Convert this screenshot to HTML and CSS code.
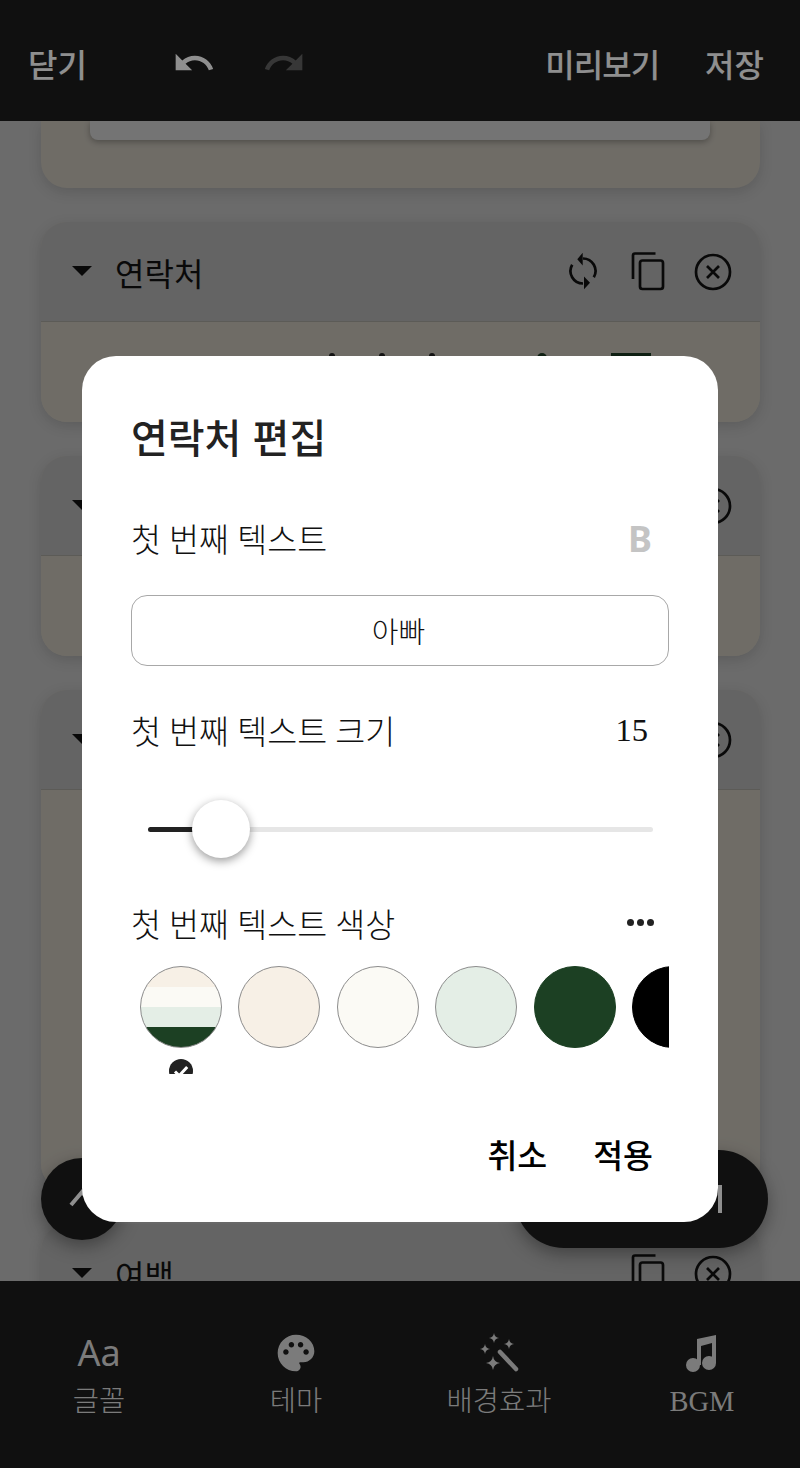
FILE: index.html
```html
<!DOCTYPE html>
<html lang="ko">
<head>
<meta charset="utf-8">
<title>연락처 편집</title>
<link rel="stylesheet" href="styles.css">
</head>
<body>
<div class="app">
  <header class="topbar">
    <span class="top-text close">닫기</span>
    <svg class="icon undo" viewBox="0 0 24 24"><path d="M12.5 8c-2.65 0-5.05.99-6.9 2.6L2 7v9h9l-3.62-3.62c1.39-1.16 3.16-1.88 5.12-1.88 3.54 0 6.55 2.31 7.6 5.5l2.37-.78C21.08 11.03 17.15 8 12.5 8z"/></svg>
    <svg class="icon redo" viewBox="0 0 24 24"><path d="M18.4 10.6C16.55 8.99 14.15 8 11.5 8c-4.65 0-8.58 3.03-9.96 7.22L3.9 16c1.05-3.19 4.05-5.5 7.6-5.5 1.95 0 3.73.72 5.12 1.88L13 16h9V7l-3.6 3.6z"/></svg>
    <span class="top-text preview">미리보기</span>
    <span class="top-text save">저장</span>
  </header>

  <main class="canvas">
    <section class="card card-first"><div class="paper"></div></section>

    <section class="card">
      <div class="card-head">
        <i class="caret"></i><span class="card-title">연락처</span>
        <svg class="line-icon" viewBox="0 0 44 44"><path d="M22 8.5A12.5 12.5 0 0 1 32.8 27.3M22 33.5A12.5 12.5 0 0 1 11.2 14.7"/><path class="solid" d="M16.3 9.3L21.7 2.7V15.5ZM29 32.7L23 26.5V39.3Z"/></svg>
        <svg class="line-icon" viewBox="0 0 44 44"><path d="M7 29V5.5a2 2 0 0 1 2-2H29.5"/><rect x="14" y="10.5" width="23" height="28.5" rx="2.5"/></svg>
        <svg class="line-icon" viewBox="0 0 44 44"><circle cx="22" cy="22" r="17"/><path d="M16 16L28 28M28 16L16 28"/></svg>
      </div>
      <div class="card-body peek"><i class="dot"></i><i class="dot"></i><i class="dot"></i><i class="dot dot-green"></i><i class="bar-green"></i></div>
    </section>

    <section class="card">
      <div class="card-head">
        <i class="caret"></i><span class="card-title"></span>
        <svg class="line-icon" viewBox="0 0 44 44"><circle cx="22" cy="22" r="17"/><path d="M16 16L28 28M28 16L16 28"/></svg>
      </div>
      <div class="card-body"></div>
    </section>

    <section class="card">
      <div class="card-head">
        <i class="caret"></i><span class="card-title"></span>
        <svg class="line-icon" viewBox="0 0 44 44"><circle cx="22" cy="22" r="17"/><path d="M16 16L28 28M28 16L16 28"/></svg>
      </div>
      <div class="card-body body-tall"></div>
    </section>

    <section class="card">
      <div class="card-head">
        <i class="caret"></i><span class="card-title">여백</span>
        <svg class="line-icon" viewBox="0 0 44 44"><path d="M7 29V5.5a2 2 0 0 1 2-2H29.5"/><rect x="14" y="10.5" width="23" height="28.5" rx="2.5"/></svg>
        <svg class="line-icon" viewBox="0 0 44 44"><circle cx="22" cy="22" r="17"/><path d="M16 16L28 28M28 16L16 28"/></svg>
      </div>
    </section>

    <div class="fab fab-up"><svg viewBox="0 0 40 40" class="fab-chevron"><path d="M9 27 L20 14 L34 30"/></svg></div>
    <div class="fab fab-add"><i class="fab-bar"></i></div>
  </main>

  <nav class="tabbar">
    <div class="tab"><span class="tab-icon tab-aa">Aa</span><span class="tab-label">글꼴</span></div>
    <div class="tab"><svg class="icon tab-icon" viewBox="0 0 24 24"><path d="M12 2C6.49 2 2 6.49 2 12s4.49 10 10 10c1.38 0 2.5-1.12 2.5-2.5 0-.61-.23-1.2-.64-1.67-.08-.1-.13-.21-.13-.33 0-.28.22-.5.5-.5H16c3.31 0 6-2.69 6-6 0-4.96-4.49-9-10-9zm5.5 11c-.83 0-1.5-.67-1.5-1.5s.67-1.5 1.5-1.5 1.5.67 1.5 1.5-.67 1.5-1.5 1.5zm-3-4c-.83 0-1.5-.67-1.5-1.5S13.67 6 14.5 6s1.5.67 1.5 1.5S15.33 9 14.5 9zM5 11.5c0-.83.67-1.5 1.5-1.5s1.5.67 1.5 1.5S7.33 13 6.5 13 5 12.33 5 11.5zm6-4c0 .83-.67 1.5-1.5 1.5S8 8.33 8 7.5 8.67 6 9.5 6s1.5.67 1.5 1.5z"/></svg><span class="tab-label">테마</span></div>
    <div class="tab"><svg class="icon tab-icon" viewBox="0 0 44 44"><path d="M17 2Q17.6 6.4 22 7 17.6 7.6 17 12 16.4 7.6 12 7 16.4 6.4 17 2Z"/><path d="M32 8Q32.6 12.4 37 13 32.6 13.6 32 18 31.4 13.6 27 13 31.4 12.4 32 8Z"/><path d="M8 13Q8.6 17.4 13 18 8.6 18.6 8 23 7.4 18.6 3 18 7.4 17.4 8 13Z"/><path d="M16 25Q16.8 31.2 23 32 16.8 32.8 16 39 15.2 32.8 9 32 15.2 31.2 16 25Z"/><path class="wand" d="M23 21 L39 38"/></svg><span class="tab-label">배경효과</span></div>
    <div class="tab"><svg class="icon tab-icon" viewBox="0 0 44 44"><path d="M17 8 L36 4 V32 H32 V12 L21 15 V34 H17 Z"/><circle cx="13" cy="34" r="7"/><circle cx="29" cy="32" r="7"/></svg><span class="tab-label">BGM</span></div>
  </nav>

  <div class="scrim">
    <div class="dialog">
      <h2 class="dialog-title">연락처 편집</h2>

      <div class="row row-first"><span>첫 번째 텍스트</span><b class="bold-toggle">B</b></div>
      <div class="field">아빠</div>

      <div class="row row-size"><span>첫 번째 텍스트 크기</span><span class="size-value">15</span></div>
      <div class="slider"><div class="slider-track"><i class="slider-fill"></i><i class="slider-thumb"></i></div></div>

      <div class="row row-color"><span>첫 번째 텍스트 색상</span>
        <span class="more"><i></i><i></i><i></i></span>
      </div>
      <div class="swatches">
        <div class="swatch-item">
          <div class="swatch swatch-multi"></div>
          <svg class="check" viewBox="0 0 24 24"><circle cx="12" cy="12" r="12"/><path d="M6 12.5l4.2 4.2L18.2 8"/></svg>
        </div>
        <div class="swatch-item"><div class="swatch c-cream"></div></div>
        <div class="swatch-item"><div class="swatch c-white"></div></div>
        <div class="swatch-item"><div class="swatch c-mint"></div></div>
        <div class="swatch-item"><div class="swatch c-green"></div></div>
        <div class="swatch-item"><div class="swatch c-black"></div></div>
      </div>

      <div class="actions"><span>취소</span><span>적용</span></div>
    </div>
  </div>
</div>
</body>
</html>
```
FILE: styles.css
```css
* { box-sizing: border-box; }
html, body { margin: 0; padding: 0; }
body {
  width: 800px;
  height: 1468px;
  overflow: hidden;
  font-family: "Liberation Serif", "Noto Sans CJK KR", serif;
}
.app {
  position: relative;
  width: 800px;
  height: 1468px;
  display: flex;
  flex-direction: column;
  overflow: hidden;
  background: #bfbfbf;
}
.icon { display: block; width: 44px; height: 44px; fill: currentColor; flex: none; }
.line-icon { display: block; width: 44px; height: 44px; flex: none; fill: none; stroke: #111; stroke-width: 2.7; }
.line-icon .solid { fill: #111; stroke: none; }

/* top bar */
.topbar {
  height: 121px;
  flex: none;
  background: #1e1e1e;
  color: #fff;
  display: flex;
  align-items: center;
  padding: 4px 36px 0 28px;
}
.top-text { font-family: "Noto Sans CJK KR", sans-serif; font-size: 32px; font-weight: 500; line-height: 44px; }
.undo { margin: 0 0 0 85px; }
.redo { margin: 0 0 0 46px; opacity: .3; }
.preview { margin-left: auto; letter-spacing: -1px; }
.save { margin-left: 46px; }

/* cards behind */
.canvas {
  position: relative;
  flex: 1;
  min-height: 0;
  overflow: hidden;
  padding: 0 40px 0 41px;
  display: flex;
  flex-direction: column;
  gap: 34px;
}
.card {
  flex: none;
  border-radius: 26px;
  background: #c6c1b7;
  box-shadow: 0 4px 14px rgba(0,0,0,.14);
  overflow: hidden;
}
.card-first {
  height: 67px;
  border-radius: 0 0 26px 26px;
  padding: 0 50px 0 49px;
  overflow: visible;
}
.paper {
  height: 19px;
  background: #cfcfcf;
  border-radius: 0 0 8px 8px;
  box-shadow: 0 2px 6px rgba(0,0,0,.3);
}
.card-head {
  height: 100px;
  background: #b2b2b2;
  border-bottom: 1px solid #a5a29b;
  display: flex;
  align-items: center;
  gap: 21px;
  padding: 0 25px 0 31px;
  color: #111;
}
.caret {
  width: 0;
  height: 0;
  border-left: 10px solid transparent;
  border-right: 10px solid transparent;
  border-top: 10px solid #111;
  margin-top: -2px;
}
.card-title {
  font-family: "Noto Sans CJK KR", sans-serif;
  font-size: 32px;
  font-weight: 400;
  line-height: 44px;
  margin: 0 auto 0 2px;
}
.card-body { height: 100px; background: #c6c1b7; }
.body-tall { height: 400px; }
.peek { display: flex; align-items: flex-start; padding: 31px 0 0 288px; }
.dot { width: 6px; height: 6px; border-radius: 50%; background: #222; margin-right: 44px; flex: none; }
.dot-green { width: 10px; height: 10px; background: #1c3a22; margin: 0 0 0 58px; }
.bar-green { width: 40px; height: 4px; background: #1c3a22; margin-left: 64px; flex: none; }

/* floating buttons */
.fab {
  position: absolute;
  background: #1e1e1e;
  box-shadow: 0 6px 18px rgba(0,0,0,.35);
}
.fab-up { left: 41px; top: 1037px; width: 82px; height: 82px; border-radius: 50%; }
.fab-chevron { position: absolute; left: 21px; top: 20px; width: 40px; height: 40px; fill: none; stroke: #fff; stroke-width: 4; }
.fab-add { left: 515px; top: 1029px; width: 253px; height: 98px; border-radius: 49px; }
.fab-bar { position: absolute; left: 203px; top: 35px; width: 4px; height: 28px; background: #fff; }

/* bottom tabs */
.tabbar {
  height: 187px;
  flex: none;
  background: #1e1e1e;
  color: #dcdcdc;
  display: grid;
  grid-template-columns: 198px 196px 210px 196px;
  padding-top: 50px;
}
.tab { display: flex; flex-direction: column; align-items: center; }
.tab-icon { height: 44px; }
.tab-aa { font-family: "Noto Sans", sans-serif; font-size: 36px; line-height: 44px; font-weight: 400; }
.tab-label { font-size: 28.5px; line-height: 44px; margin-top: 5px; font-weight: 200; }
.wand { fill: none; stroke: currentColor; stroke-width: 4.5; stroke-linecap: round; }

/* scrim + dialog */
.scrim {
  position: absolute;
  inset: 0;
  background: rgba(0,0,0,.44);
  padding-top: 356px;
  display: flex;
  justify-content: center;
  align-items: flex-start;
}
.dialog {
  width: 636px;
  height: 866px;
  background: #fff;
  border-radius: 34px;
  padding: 0 49px;
  color: #111;
}
.dialog-title {
  margin: 0;
  padding-top: 51px;
  font-family: "Noto Sans CJK KR", sans-serif;
  font-size: 40px;
  line-height: 58px;
  font-weight: 500;
  color: #222;
}
.row {
  display: flex;
  justify-content: space-between;
  align-items: center;
  font-size: 32.6px;
  font-weight: 200;
  line-height: 44px;
  height: 44px;
}
.row-first { margin-top: 54px; }
.bold-toggle {
  font-family: "Noto Sans", "Liberation Sans", sans-serif;
  font-weight: 700;
  font-size: 36px;
  color: #c4c4c4;
  margin: -4px 17px 0 0;
}
.field {
  margin-top: 32px;
  height: 71px;
  border: 1px solid #a8a8a8;
  border-radius: 16px;
  display: flex;
  align-items: center;
  justify-content: center;
  font-size: 29px;
  font-weight: 200;
  padding: 0 3px 2px 0;
}
.row-size { margin-top: 45px; }
.size-value { margin: -6px 21px 0 0; }
.slider { padding: 72px 16px 0 17px; height: 100px; }
.slider-track { position: relative; height: 5px; background: #e6e6e6; border-radius: 3px; }
.slider-fill { position: absolute; left: 0; top: 0; width: 50px; height: 5px; background: #222; border-radius: 3px; }
.slider-thumb {
  position: absolute;
  left: 44px;
  top: -27px;
  width: 58px;
  height: 58px;
  border-radius: 50%;
  background: #fff;
  box-shadow: 0 3px 10px rgba(0,0,0,.4);
}
.row-color { margin-top: 49px; }
.more { display: flex; gap: 3px; margin: -8px 15px 0 0; }
.more i { width: 7px; height: 7px; border-radius: 50%; background: #222; }
.swatches {
  margin-top: 18px;
  height: 108px;
  padding-left: 9px;
  display: flex;
  gap: 16.4px;
  overflow: hidden;
}
.swatch-item { flex: none; width: 82px; display: flex; flex-direction: column; align-items: center; }
.swatch { width: 82px; height: 82px; border-radius: 50%; border: 1px solid #8c8c8c; flex: none; }
.swatch-multi { background: linear-gradient(#f7f0e6 0 25%, #fbfaf5 25% 50%, #e4eee6 50% 75%, #1c4023 75% 100%); }
.c-cream { background: #f7f0e6; }
.c-white { background: #fbfaf5; }
.c-mint { background: #e4eee6; }
.c-green { background: #1c4023; border-color: #1c4023; }
.c-black { background: #000; border-color: #000; }
.check { width: 24px; height: 24px; flex: none; margin-top: 11px; }
.check circle { fill: #222; }
.check path { fill: none; stroke: #fff; stroke-width: 3; }
.actions {
  margin-top: 58px;
  display: flex;
  justify-content: flex-end;
  gap: 46px;
  padding-right: 16px;
  font-family: "Noto Sans CJK KR", sans-serif;
  font-size: 32.5px;
  font-weight: 500;
  line-height: 44px;
  color: #000;
}
```
